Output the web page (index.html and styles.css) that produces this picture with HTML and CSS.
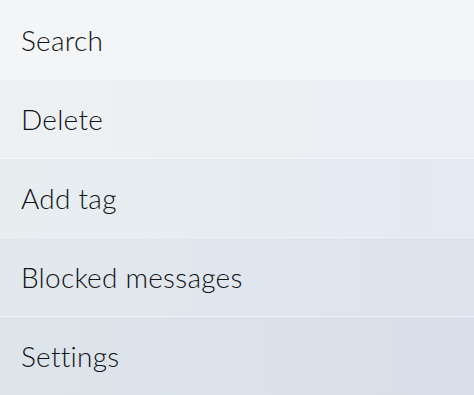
FILE: index.html
```html
<!DOCTYPE html>
<html>
<head>
<meta charset="utf-8">
<link rel="stylesheet" href="styles.css">
</head>
<body>
<ul class="menu">
  <li class="item item-1">Search</li>
  <li class="item item-2">Delete</li>
  <li class="item item-3">Add tag</li>
  <li class="item item-4">Blocked messages</li>
  <li class="item item-5">Settings</li>
</ul>
</body>
</html>
```
FILE: styles.css
```css
html, body {
  margin: 0;
  padding: 0;
  width: 474px;
  height: 395px;
  overflow: hidden;
  background: #dde2eb;
}
.menu {
  list-style: none;
  margin: 0;
  padding: 0;
  display: flex;
  flex-direction: column;
}
.item {
  height: 78px;
  border-top: 1px solid rgba(255,255,255,0.5);
  display: flex;
  align-items: center;
  padding-left: 21px;
  font-family: Lato, "Open Sans", sans-serif;
  font-weight: 300;
  font-size: 28px;
  font-variant-ligatures: none;
  letter-spacing: 0.25px;
  color: #111316;
}
.item-1 { background: linear-gradient(90deg, #f3f5f6, #f4f5f8); border-top-color: #f6f7f8; }
.item-2 { background: linear-gradient(90deg, #edf1f2, #ebeef3); }
.item-3 { background: linear-gradient(90deg, #e7eef0, #e4e9f2); }
.item-4 { background: linear-gradient(90deg, #e2e9ed, #dee3ed); }
.item-5 { background: linear-gradient(90deg, #dde5ea, #d9dfea); }
```
